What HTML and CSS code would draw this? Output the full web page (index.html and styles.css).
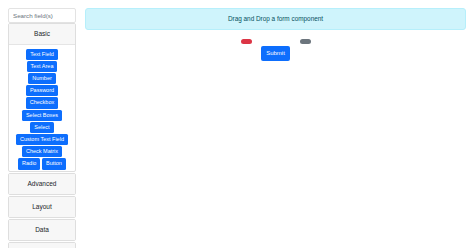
FILE: index.html
```html
<!DOCTYPE html>
<html>
<head>
<meta charset="utf-8">
<link rel="stylesheet" href="styles.css">
</head>
<body>
<div class="builder">
  <aside class="sidebar">
    <input class="search" type="text" placeholder="Search field(s)">
    <div class="card">
      <div class="card-header">Basic</div>
      <div class="card-body">
        <span class="btn">Text Field</span>
        <span class="btn">Text Area</span>
        <span class="btn">Number</span>
        <span class="btn">Password</span>
        <span class="btn">Checkbox</span>
        <span class="btn">Select Boxes</span>
        <span class="btn">Select</span>
        <span class="btn">Custom Text Field</span>
        <span class="btn">Check Matrix</span>
        <span class="btn">Radio</span>
        <span class="btn">Button</span>
      </div>
    </div>
    <div class="card"><div class="card-header">Advanced</div></div>
    <div class="card"><div class="card-header">Layout</div></div>
    <div class="card"><div class="card-header">Data</div></div>
    <div class="card"><div class="card-header">&nbsp;</div></div>
  </aside>
  <main class="main">
    <div class="alert">Drag and Drop a form component</div>
    <div class="component">
      <span class="pill pill-red"></span>
      <span class="pill pill-gray"></span>
      <span class="submit">Submit</span>
    </div>
  </main>
</div>
</body>
</html>
```
FILE: styles.css
```css
* { box-sizing: border-box; }
html, body { margin: 0; padding: 0; background: #fff; }
body { font-family: "Liberation Sans", Arial, sans-serif; color: #212529; }
.builder { display: flex; gap: 9px; padding: 8px; height: 248px; overflow: hidden; }
.sidebar { width: 68px; flex: none; display: flex; flex-direction: column; }
.sidebar > * { flex-shrink: 0; }
.search {
  width: 68px; height: 15px; border: 1px solid #e3e3e3; border-radius: 2px;
  font-family: "Liberation Sans", Arial, sans-serif; font-size: 6.2px; padding: 0 4px;
  color: #555; outline: none; margin: 0;
}
.search::placeholder { color: #6c757d; }
.card { border: 1px solid #dedede; border-radius: 2px; margin-bottom: 1px; background: #fff; }
.card-header {
  background: #f7f7f7; text-align: center; font-size: 6.5px; line-height: 8px;
  padding: 6px 0; height: 20px; color: #212529;
}
.card-body { border-top: 1px solid #e5e5e5; padding: 3px 6px 1px; text-align: center; font-size: 0; line-height: 0; }
.btn {
  display: inline-block; background: #0d6efd; color: #fff; font-size: 5.5px; line-height: 7.2px;
  padding: 2px 4px; border-radius: 1.5px; margin: 0.5px 0.8px; white-space: nowrap;
}
.main { flex: 1; display: flex; flex-direction: column; align-items: center; }
.alert {
  align-self: stretch; background: #cff4fc; border: 1px solid #b6effb; color: #055160;
  border-radius: 3px; height: 22px; font-size: 6.4px; line-height: 20px; text-align: center;
}
.component { position: relative; padding-top: 16px; }
.submit {
  display: block; background: #0d6efd; color: #fff; font-size: 6px; line-height: 9px;
  padding: 3px 5.5px; border-radius: 2px;
}
.pill { position: absolute; top: 9px; width: 11px; height: 5px; border-radius: 3px; }
.pill-red { background: #dc3545; left: -20px; }
.pill-gray { background: #6c757d; left: 39px; }
```
